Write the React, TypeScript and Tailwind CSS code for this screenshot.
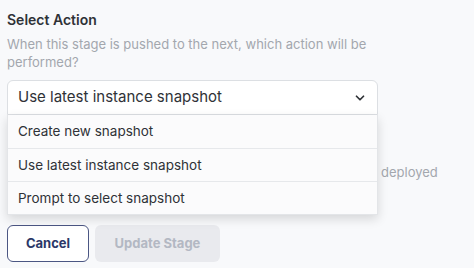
import { ChevronDown } from "lucide-react";

const options = ["Create new snapshot", "Use latest instance snapshot", "Prompt to select snapshot"];

export default function App() {
  return (
    <div className="w-[474px] h-[268px] overflow-hidden bg-[#f8f9fb] font-['Inter','Liberation_Sans',sans-serif] pl-[7px] pt-[10px]">
      <h3 className="text-[14px] leading-[20px] font-semibold text-[#2f3237]">Select Action</h3>
      <p className="mt-[5px] w-[380px] text-[13px] leading-[18px] text-[#a3a7ae]">
        When this stage is pushed to the next, which action will be performed?
      </p>

      <div className="relative mt-[9px] w-[371px]">
        <div className="flex h-[35px] items-center justify-between rounded-t-[6px] border border-[#dcdfe3] bg-white pl-[10px] pr-[10px]">
          <span className="text-[15px] text-[#2f3237]">Use latest instance snapshot</span>
          <ChevronDown className="h-[14px] w-[14px] text-[#2f3237]" strokeWidth={3} />
        </div>

        <div className="absolute left-0 top-full z-10 w-full border-x border-b border-[#e3e5e8] bg-[#fbfbfc] shadow-[0_4px_10px_rgba(0,0,0,0.14)]">
          {options.map((o, i) => (
            <div
              key={o}
              className={
                "flex h-[33px] items-center pl-[10px] text-[13.5px] text-[#2f3237] " +
                (i > 0 ? "border-t border-[#e6e8eb]" : "")
              }
            >
              {o}
            </div>
          ))}
        </div>
      </div>

      <div className="h-[110px] pt-[48px] pl-[374px]">
        <p className="text-[13px] leading-[18px] text-[#a3a7ae]">deployed</p>
      </div>

      <div className="flex gap-[6px]">
        <button className="h-[37px] w-[82px] rounded-[6px] border border-[#4b5683] bg-white text-[13px] font-bold text-[#2c3868]">
          Cancel
        </button>
        <button className="h-[37px] w-[125px] rounded-[6px] bg-[#e9eaee] text-[13px] font-bold text-[#b3b8c3]">
          Update Stage
        </button>
      </div>
    </div>
  );
}
